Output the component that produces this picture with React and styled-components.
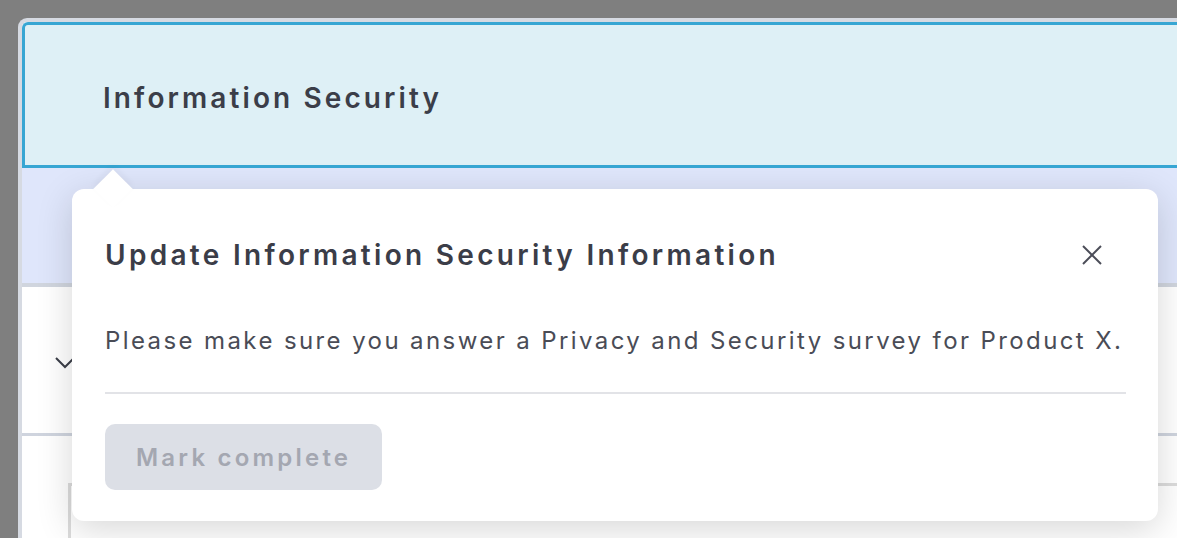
import React from "react";
import styled, { createGlobalStyle } from "styled-components";

const GlobalStyle = createGlobalStyle`
  html, body {
    margin: 0;
    padding: 0;
    background: #7f7f7f;
    overflow: hidden;
  }
  body {
    font-family: "Inter", "Open Sans", sans-serif;
  }
`;

const App = () => {
  return (
    <>
      <GlobalStyle />
      <Page>
        <Panel>
          <Header>
            <HeaderTitle>Information Security</HeaderTitle>
          </Header>
          <Band />
          <Row>
            <Chevron viewBox="0 0 20 12">
              <polyline points="1,1 10,10 19,1" />
            </Chevron>
          </Row>
          <Lower>
            <InnerBox />
          </Lower>

          <Popover>
            <Arrow />
            <PopTop>
              <PopTitle>Update Information Security Information</PopTitle>
              <Close aria-label="Close">
                <svg viewBox="0 0 20 20">
                  <line x1="1" y1="1" x2="19" y2="19" />
                  <line x1="19" y1="1" x2="1" y2="19" />
                </svg>
              </Close>
            </PopTop>
            <PopBody>
              Please make sure you answer a Privacy and Security survey for Product X.
            </PopBody>
            <Actions>
              <MarkButton disabled>Mark complete</MarkButton>
            </Actions>
          </Popover>
        </Panel>
      </Page>
    </>
  );
};

const Page = styled.div`
  padding: 18px 0 0 18px;
  height: 538px;
  box-sizing: border-box;
  overflow: hidden;
`;

const Panel = styled.div`
  position: relative;
  background: #ffffff;
  border-top: 4px solid #d6dae2;
  border-left: 4px solid #d6dae2;
  border-top-left-radius: 9px;
  height: 700px;
`;

const Header = styled.div`
  height: 146px;
  box-sizing: border-box;
  background: #def0f6;
  border-top: 3px solid #37a6d3;
  border-left: 3px solid #37a6d3;
  border-bottom: 3px solid #37a6d3;
  border-top-left-radius: 6px;
  display: flex;
  align-items: center;
  padding-left: 78px;
`;

const HeaderTitle = styled.h2`
  margin: 5px 0 0;
  font-family: "Inter", sans-serif;
  font-weight: 600;
  font-size: 28px;
  letter-spacing: 3.1px;
  color: #3b3e49;
`;

const Band = styled.div`
  height: 115px;
  background: #dfe6fb;
  border-bottom: 4px solid #d0d5de;
`;

const Row = styled.div`
  height: 146px;
  border-bottom: 3px solid #cfd4de;
  display: flex;
  align-items: center;
  padding-left: 33px;
`;

const Chevron = styled.svg`
  width: 20px;
  height: 12px;
  margin-top: 6px;
  fill: none;
  stroke: #3b3e48;
  stroke-width: 2;
`;

const Lower = styled.div`
  padding: 47px 0 0 46px;
`;

const InnerBox = styled.div`
  height: 200px;
  border-top: 3px solid #dcdcdc;
  border-left: 3px solid #dcdcdc;
`;

const Popover = styled.div`
  position: absolute;
  left: 50px;
  top: 167px;
  width: 1086px;
  height: 332px;
  box-sizing: border-box;
  background: #ffffff;
  border-radius: 12px;
  box-shadow: 0 8px 36px rgba(0, 0, 0, 0.16);
  padding: 49px 32px 32px 33px;
  display: flex;
  flex-direction: column;
`;

const Arrow = styled.span`
  position: absolute;
  left: 27px;
  top: -14px;
  width: 28px;
  height: 28px;
  background: #ffffff;
  transform: rotate(45deg);
  box-shadow: -3px -3px 6px rgba(0, 0, 0, 0.04);
`;

const PopTop = styled.div`
  display: flex;
  align-items: center;
  justify-content: space-between;
  height: 34px;
`;

const PopTitle = styled.h3`
  margin: 0;
  font-family: "Inter", sans-serif;
  font-weight: 600;
  font-size: 28px;
  letter-spacing: 3.3px;
  color: #3b3d48;
`;

const Close = styled.button`
  border: none;
  background: none;
  padding: 0;
  margin-right: 24px;
  width: 20px;
  height: 20px;
  display: flex;
  cursor: pointer;

  svg {
    width: 20px;
    height: 20px;
    stroke: #4b4d58;
    stroke-width: 2;
  }
`;

const PopBody = styled.p`
  margin: 51px 0 0;
  padding-bottom: 33px;
  border-bottom: 2px solid #e2e3e7;
  font-family: "Inter", sans-serif;
  font-weight: 400;
  font-size: 24px;
  line-height: 36px;
  letter-spacing: 2.4px;
  color: #4a4c56;
  white-space: nowrap;
`;

const Actions = styled.div`
  padding-top: 30px;
  display: flex;
`;

const MarkButton = styled.button`
  height: 66px;
  padding: 0 31px;
  border: none;
  border-radius: 10px;
  background: #dcdfe6;
  color: #a4a7b1;
  font-family: "Inter", sans-serif;
  font-weight: 600;
  font-size: 24px;
  letter-spacing: 3.2px;
`;

export default App;
